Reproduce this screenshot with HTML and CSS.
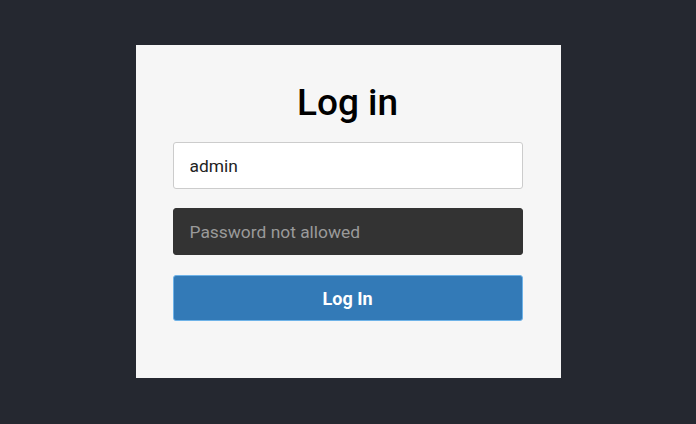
FILE: index.html
```html
<!DOCTYPE html>
<html>
<head>
<meta charset="utf-8">
<link rel="stylesheet" href="styles.css">
</head>
<body>
<div class="page">
  <form class="card">
    <h1 class="title">Log in</h1>
    <input class="field" type="text" value="admin">
    <input class="field field-disabled" type="password" placeholder="Password not allowed">
    <button class="btn" type="button">Log In</button>
  </form>
</div>
</body>
</html>
```
FILE: styles.css
```css
html, body {
  margin: 0;
  padding: 0;
  background: #252830;
  font-family: Roboto, "Liberation Sans", sans-serif;
}
.page {
  height: 424px;
  box-sizing: border-box;
  padding-top: 45px;
  display: flex;
  align-items: flex-start;
  justify-content: center;
}
.card {
  width: 425px;
  height: 333px;
  box-sizing: border-box;
  background: #f6f6f6;
  padding: 36px 38px 0 37px;
  display: flex;
  flex-direction: column;
}
.title {
  margin: 0 0 17px;
  font-size: 37px;
  line-height: 44px;
  font-weight: 500;
  color: #000;
  text-align: center;
}
.field {
  height: 47px;
  box-sizing: border-box;
  border: 1px solid #ccc;
  border-radius: 3px;
  background: #fff;
  padding: 0 16px;
  font-family: Roboto, "Liberation Sans", sans-serif;
  font-size: 17.4px;
  color: #222;
  margin: 0 0 19px;
  outline: none;
}
.field-disabled {
  background: #333;
  border-color: #333;
  margin-bottom: 20px;
}
.field-disabled::placeholder {
  color: #9a9a9a;
  opacity: 1;
}
.btn {
  height: 46px;
  box-sizing: border-box;
  border: 1px solid #6fb3e8;
  border-radius: 3px;
  background: #337ab7;
  color: #fff;
  font-family: Roboto, "Liberation Sans", sans-serif;
  font-size: 18px;
  font-weight: 700;
  padding: 0;
}
```
